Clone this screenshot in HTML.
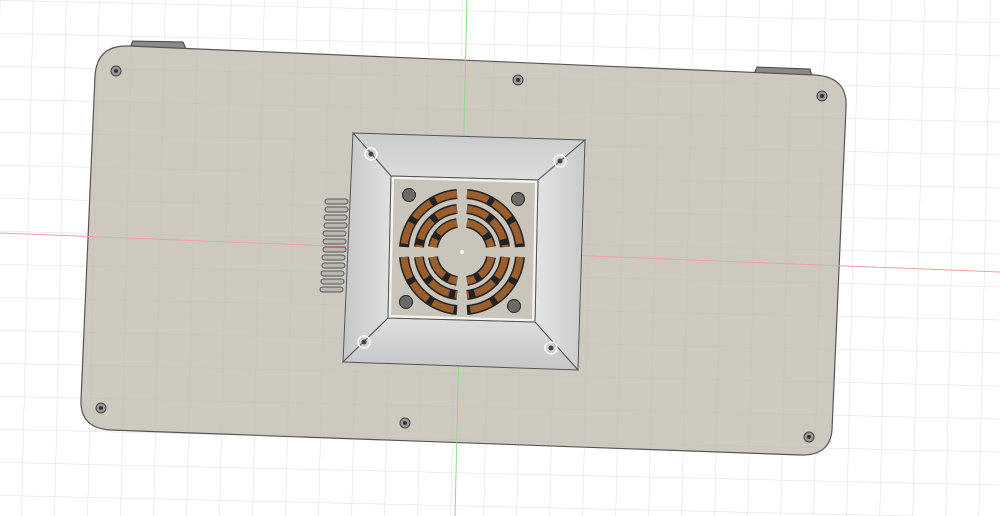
<!DOCTYPE html>
<html><head><meta charset="utf-8"><style>
html,body{margin:0;padding:0;background:#fff;width:1000px;height:516px;overflow:hidden}
</style></head><body>
<svg width="1000" height="516" viewBox="0 0 1000 516" xmlns="http://www.w3.org/2000/svg">
<defs>
<pattern id="g" width="33" height="33" patternUnits="userSpaceOnUse" patternTransform="rotate(1.3)">
<path d="M0 0H33M0 0V33" stroke="#dcdcdc" stroke-width="1" fill="none"/>
</pattern>
<linearGradient id="top" x1="0" y1="0" x2="0" y2="1"><stop offset="0" stop-color="#c9cbcc"/><stop offset="1" stop-color="#dcdddd"/></linearGradient>
<linearGradient id="lft" x1="0" y1="0" x2="1" y2="0"><stop offset="0" stop-color="#c4c6c7"/><stop offset="1" stop-color="#e0e0e0"/></linearGradient>
<linearGradient id="rgt" x1="0" y1="0" x2="1" y2="0"><stop offset="0" stop-color="#e4e4e4"/><stop offset="1" stop-color="#c8cacb"/></linearGradient>
<linearGradient id="bot" x1="0" y1="0" x2="0" y2="1"><stop offset="0" stop-color="#dedede"/><stop offset="1" stop-color="#c4c6c7"/></linearGradient>
<pattern id="g2" width="33" height="33" patternUnits="userSpaceOnUse" patternTransform="rotate(1.3)">
<path d="M0 0H33M0 0V33" stroke="#bfbbb1" stroke-width="1" fill="none"/>
</pattern>
</defs>
<rect width="1000" height="516" fill="#fff"/>
<rect width="1000" height="516" fill="url(#g)"/>
<path d="M130 47 L133 41 L183 42 L186 49 Z" fill="#8a8a8a" stroke="#444"/>
<path d="M754 74 L757 67 L810 69 L812 76 Z" fill="#8a8a8a" stroke="#444"/>
<path d="M128 46 L815 75 Q848 77 846 108 L832 430 Q830 456 800 455 L110 430 Q80 428 81 400 L95 76 Q97 45 128 46 Z" fill="#cdc9bf" stroke="#555" stroke-width="1.2"/>
<path d="M128 46 L815 75 Q848 77 846 108 L832 430 Q830 456 800 455 L110 430 Q80 428 81 400 L95 76 Q97 45 128 46 Z" fill="url(#g2)" opacity="0.45"/>
<line x1="467" y1="0" x2="455" y2="516" stroke="#8fd98f" stroke-width="1"/>
<line x1="0" y1="233" x2="1000" y2="272" stroke="#f0a0a0" stroke-width="1"/>
<g fill="#999" stroke="#444" stroke-width="1">
<circle cx="116" cy="71" r="5"/><circle cx="518" cy="80" r="5"/><circle cx="822" cy="96" r="5"/>
<circle cx="101" cy="408" r="5"/><circle cx="405" cy="423" r="5"/><circle cx="809" cy="437" r="5"/>
</g>
<g fill="#333"><circle cx="116" cy="71" r="2"/><circle cx="518" cy="80" r="2"/><circle cx="822" cy="96" r="2"/><circle cx="101" cy="408" r="2"/><circle cx="405" cy="423" r="2"/><circle cx="809" cy="437" r="2"/></g>
<g fill="#b8b6b0" stroke="#555" stroke-width="1">
<rect x="325" y="199" width="23" height="5" rx="2.5"/><rect x="325" y="207" width="23" height="5" rx="2.5"/>
<rect x="324" y="215" width="23" height="5" rx="2.5"/><rect x="324" y="223" width="23" height="5" rx="2.5"/>
<rect x="323" y="231" width="23" height="5" rx="2.5"/><rect x="323" y="239" width="23" height="5" rx="2.5"/>
<rect x="323" y="247" width="23" height="5" rx="2.5"/><rect x="322" y="255" width="23" height="5" rx="2.5"/>
<rect x="322" y="263" width="23" height="5" rx="2.5"/><rect x="321" y="271" width="23" height="5" rx="2.5"/>
<rect x="321" y="279" width="23" height="5" rx="2.5"/><rect x="320" y="287" width="23" height="5" rx="2.5"/>
</g>
<path d="M353 133 L585 140 L538 180 L391 176 Z" fill="url(#top)" stroke="#555"/>
<path d="M353 133 L391 176 L388 318 L343 362 Z" fill="url(#lft)" stroke="#555"/>
<path d="M585 140 L578 370 L535 322 L538 180 Z" fill="url(#rgt)" stroke="#555"/>
<path d="M343 362 L388 318 L535 322 L578 370 Z" fill="url(#bot)" stroke="#555"/>
<path d="M391 176 L538 180 L535 322 L388 318 Z" fill="#f2f2ee" stroke="#555"/>
<path d="M394 179 L535 183 L532 319 L391 315 Z" fill="#c9c5ba"/>
<g fill="#ddd" stroke="#fff" stroke-width="1.5" opacity="0.9">
<circle cx="371" cy="154" r="6" fill="none"/><circle cx="560" cy="161" r="6" fill="none"/>
<circle cx="364" cy="342" r="6" fill="none"/><circle cx="551" cy="348" r="6" fill="none"/>
</g>
<g fill="#444"><circle cx="371" cy="154" r="2.5"/><circle cx="560" cy="161" r="2.5"/><circle cx="364" cy="342" r="2.5"/><circle cx="551" cy="348" r="2.5"/></g>
<g fill="#6a6a66" stroke="#222"><circle cx="409" cy="195" r="6.5"/><circle cx="518" cy="199" r="6.5"/><circle cx="406" cy="302" r="6.5"/><circle cx="514" cy="306" r="6.5"/></g>
<g fill="none" stroke-linecap="butt" transform="translate(462 252)">
<g stroke="#222" stroke-width="10">
<path d="M-5 -58 A58 58 0 0 0 -58 -5"/><path d="M5 -58 A58 58 0 0 1 58 -5"/><path d="M-58 5 A58 58 0 0 0 -5 58"/><path d="M58 5 A58 58 0 0 1 5 58"/>
<path d="M-5 -43 A43 43 0 0 0 -43 -5"/><path d="M5 -43 A43 43 0 0 1 43 -5"/><path d="M-43 5 A43 43 0 0 0 -5 43"/><path d="M43 5 A43 43 0 0 1 5 43"/>
<path d="M-5 -29 A29 29 0 0 0 -29 -5"/><path d="M5 -29 A29 29 0 0 1 29 -5"/><path d="M-29 5 A29 29 0 0 0 -5 29"/><path d="M29 5 A29 29 0 0 1 5 29"/>
</g>
<g stroke="#9a5e2c" stroke-width="7" stroke-dasharray="22 6">
<path d="M-5 -58 A58 58 0 0 0 -58 -5"/><path d="M5 -58 A58 58 0 0 1 58 -5"/><path d="M-58 5 A58 58 0 0 0 -5 58"/><path d="M58 5 A58 58 0 0 1 5 58"/>
<path d="M-5 -43 A43 43 0 0 0 -43 -5"/><path d="M5 -43 A43 43 0 0 1 43 -5"/><path d="M-43 5 A43 43 0 0 0 -5 43"/><path d="M43 5 A43 43 0 0 1 5 43"/>
<path d="M-5 -29 A29 29 0 0 0 -29 -5"/><path d="M5 -29 A29 29 0 0 1 29 -5"/><path d="M-29 5 A29 29 0 0 0 -5 29"/><path d="M29 5 A29 29 0 0 1 5 29"/>
</g>
<circle cx="0" cy="0" r="2" fill="#f4f4f4"/>
</g>
</svg>
</body></html>
